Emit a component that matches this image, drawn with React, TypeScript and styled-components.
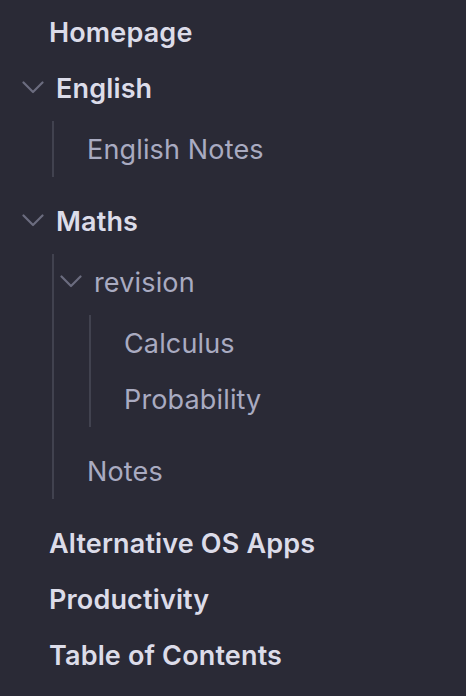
import React from 'react';
import styled, { createGlobalStyle } from 'styled-components';

type Node = {
  name: string;
  children?: Node[];
};

const tree: Node[] = [
  { name: 'Homepage' },
  { name: 'English', children: [{ name: 'English Notes' }] },
  {
    name: 'Maths',
    children: [
      { name: 'revision', children: [{ name: 'Calculus' }, { name: 'Probability' }] },
      { name: 'Notes' },
    ],
  },
  { name: 'Alternative OS Apps' },
  { name: 'Productivity' },
  { name: 'Table of Contents' },
];

const GlobalStyle = createGlobalStyle`
  html, body {
    margin: 0;
    padding: 0;
    background: #2a2a36;
  }
  body {
    font-family: Inter, "Noto Sans", "Liberation Sans", sans-serif;
    -webkit-font-smoothing: antialiased;
  }
`;

const Explorer = styled.div`
  width: 466px;
  height: 696px;
  box-sizing: border-box;
  padding: 4px 0 0 16px;
  background: #2a2a36;
  overflow: hidden;
`;

const Row = styled.div<{ $top: boolean }>`
  display: flex;
  align-items: center;
  height: 56px;
  font-size: 27px;
  letter-spacing: 0.15px;
  white-space: nowrap;
  font-weight: ${(p) => (p.$top ? 600 : 400)};
  color: ${(p) => (p.$top ? '#dcdce9' : '#a9abc1')};
`;

const FileRow = styled(Row)`
  padding-left: 33px;
`;

const FolderRow = styled(Row)`
  padding-left: 6px;
`;

const Chevron = styled.svg`
  width: 22px;
  height: 13px;
  margin-right: 12px;
  flex-shrink: 0;
  position: relative;
  top: -1px;
`;

const Children = styled.div<{ $nested: boolean }>`
  margin: 5px 0 16px ${(p) => (p.$nested ? 35 : 36)}px;
  border-left: 2px solid #41424f;
`;

const ChevronDown = () => (
  <Chevron viewBox="0 0 22 13">
    <polyline
      points="1.5,1.5 11,11 20.5,1.5"
      fill="none"
      stroke="#6b6c7f"
      strokeWidth="2.2"
      strokeLinecap="round"
      strokeLinejoin="round"
    />
  </Chevron>
);

const TreeItem = ({ node, top }: { node: Node; top: boolean }) => {
  if (!node.children) {
    return <FileRow $top={top}>{node.name}</FileRow>;
  }
  return (
    <div>
      <FolderRow $top={top}>
        <ChevronDown />
        {node.name}
      </FolderRow>
      <Children $nested={!top}>
        {node.children.map((child) => (
          <TreeItem key={child.name} node={child} top={false} />
        ))}
      </Children>
    </div>
  );
};

const App = () => (
  <>
    <GlobalStyle />
    <Explorer>
      {tree.map((node) => (
        <TreeItem key={node.name} node={node} top />
      ))}
    </Explorer>
  </>
);

export default App;
